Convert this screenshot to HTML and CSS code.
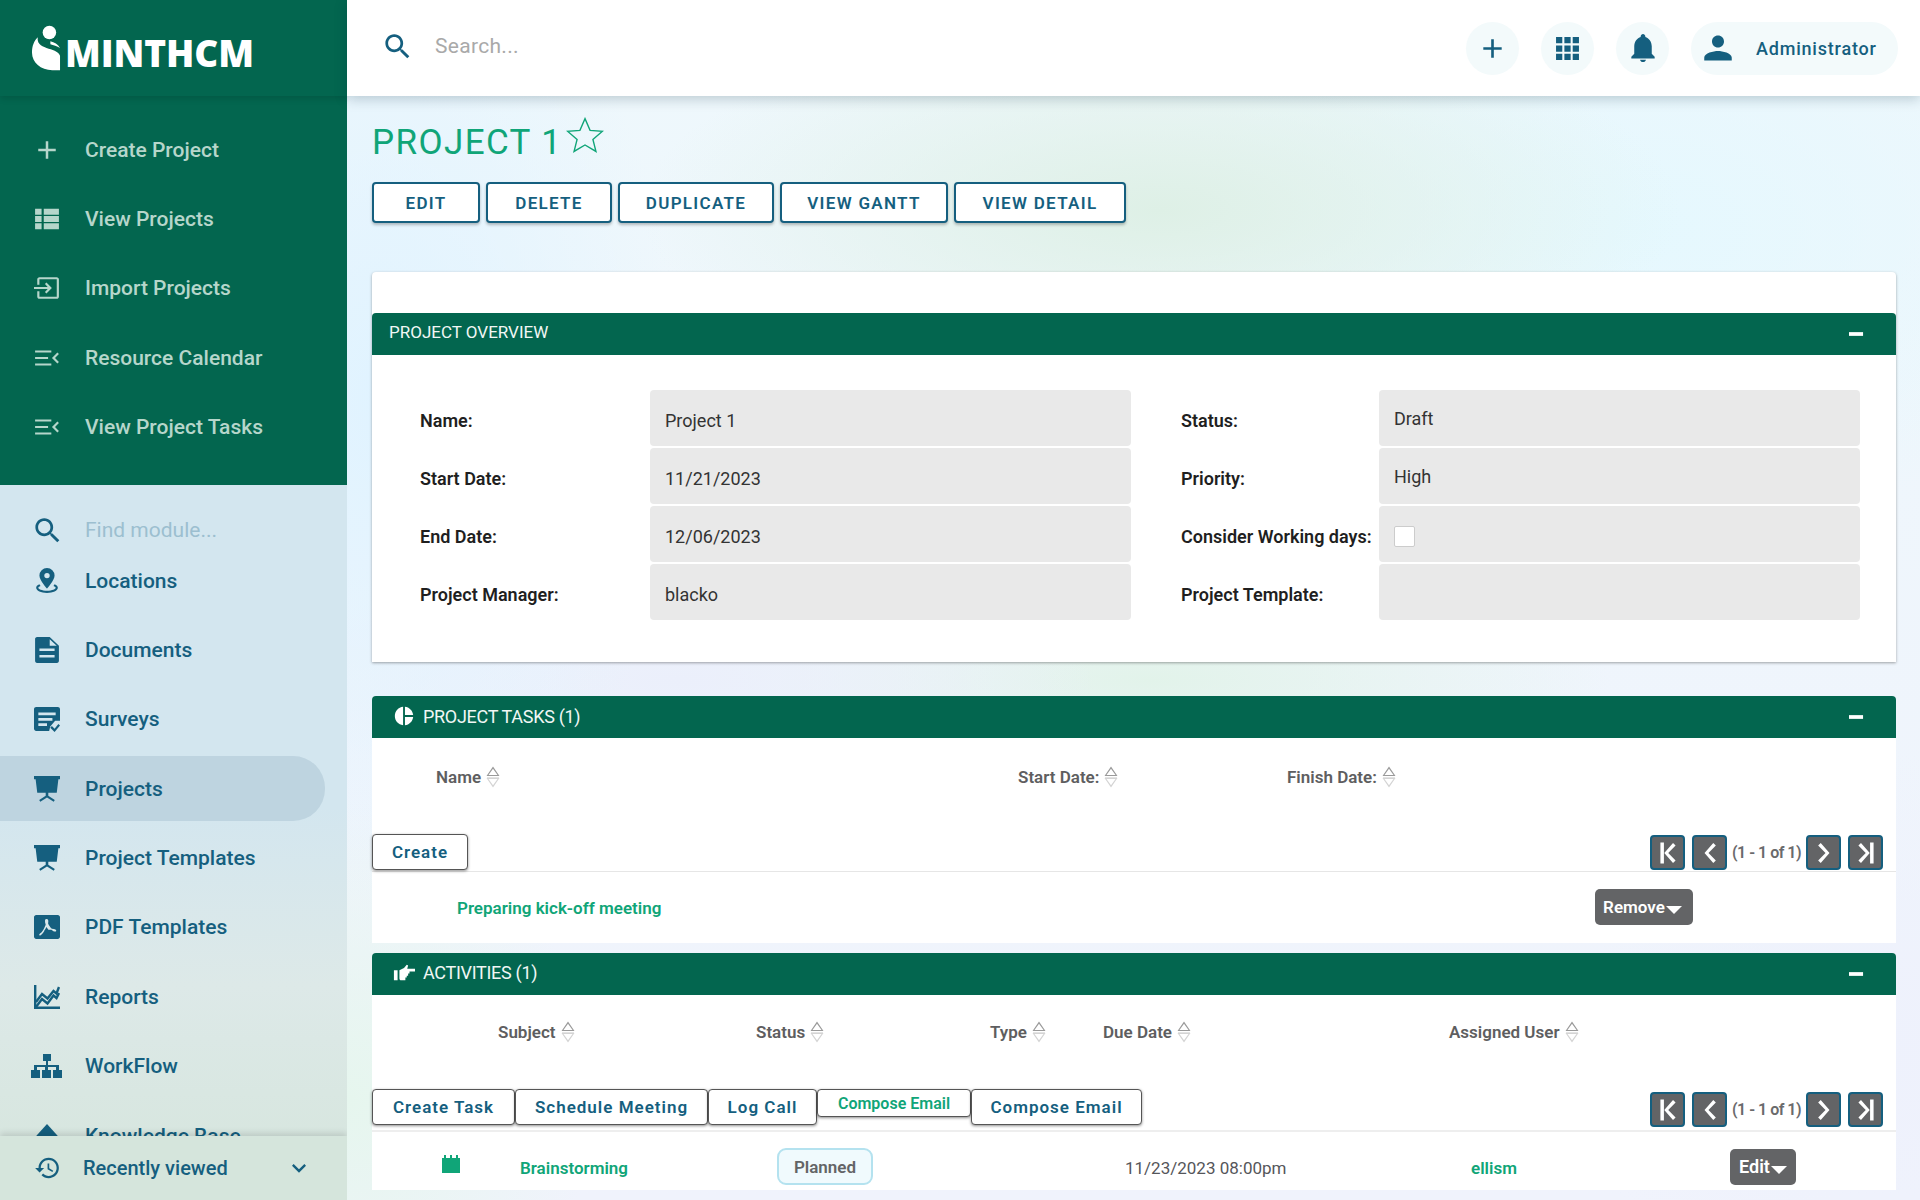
FILE: index.html
```html
<!DOCTYPE html>
<html lang="en">
<head>
    <meta charset="UTF-8">
    <meta name="viewport" content="width=device-width, initial-scale=1.0">
    <title>Project 1 - MintHCM</title>
    <link rel="stylesheet" href="styles.css">
</head>
<body>

    <!-- Shared icons -->
    <svg class="sprite" xmlns="http://www.w3.org/2000/svg">
        <symbol id="i-plus" viewBox="4 4 16 16"><path d="M19 13h-6v6h-2v-6H5v-2h6V5h2v6h6v2z"/></symbol>
        <symbol id="i-search" viewBox="2 2 19 19"><path d="M15.5 14h-.79l-.28-.27C15.41 12.59 16 11.11 16 9.5 16 5.91 13.09 3 9.5 3S3 5.91 3 9.5 5.91 16 9.5 16c1.61 0 3.09-.59 4.23-1.57l.27.28v.79l5 4.99L20.49 19l-4.99-5zm-6 0C7.01 14 5 11.99 5 9.5S7.01 5 9.5 5 14 7.01 14 9.5 11.99 14 9.5 14z"/></symbol>
        <symbol id="i-menu" viewBox="0 0 24 24"><path d="M1 19h15v-2H1v2zm0-6h12v-2H1v2zM1 5v2h15V5H1zm22 10.6L19.4 12 23 8.4 21.6 7l-5 5 5 5 1.400-1.400z"/></symbol>
        <symbol id="i-board" viewBox="0 0 24 24"><path d="M0 0h24v3h-1.500L21 15.500H13.200v2.700l6 4-1 1.500-6.200-3.800-6.200 3.800-1-1.500 6-4v-2.700H3L1.500 3H0V0z"/></symbol>
        <symbol id="i-sort" viewBox="0 0 16 24"><path d="M8 1.500 14.500 11h-13L8 1.500zM8 3.800 3.500 10h9L8 3.800z" fill="#9a9a9a"/><path d="M1.500 13h13L8 22.500 1.500 13zM3.500 14 8 20.200 12.500 14h-9z" fill="#d4d4d4"/><path d="M2 12h12v.9H2z" fill="#e0e0e0"/></symbol>
        <symbol id="i-first" viewBox="0 0 24 24"><path d="M5.500 3h3v18h-3V3zm13 2.600L12.200 12l6.300 6.400-2.200 2.100L8.800 12l7.500-8.500 2.200 2.100z"/></symbol>
        <symbol id="i-prev" viewBox="0 0 24 24"><path d="M17 5.600 10.700 12l6.300 6.400-2.200 2.100L7.300 12l7.500-8.500L17 5.600z"/></symbol>
        <symbol id="i-next" viewBox="0 0 24 24"><path d="M7 5.600 13.300 12 7 18.400l2.200 2.100L16.700 12 9.200 3.500 7 5.600z"/></symbol>
        <symbol id="i-last" viewBox="0 0 24 24"><path d="M18.500 3h-3v18h3V3zm-13 2.600L11.800 12l-6.300 6.400 2.200 2.100L15.200 12 7.700 3.500 5.500 5.600z"/></symbol>
        <symbol id="i-minus" viewBox="0 0 16 4"><path d="M0 0h15v4H0z"/></symbol>
    </svg>

    <div class="app">

        <!-- Sidebar -->
        <aside class="sidebar">
            <div class="side-top">
                <div class="logo">
                    <svg class="logo-mark" viewBox="0 0 30 46"><circle cx="18" cy="7" r="7"/><path d="M6 12c-1 6 3 9 9 11 6 2 12 3 14 8v15h-8C9 46 0 38 0 28c0-7 2-12 6-16zM19 16c4 1 8 3 10 7-3-2-7-3-10-4z"/></svg>
                    <span class="logo-text">MINTHCM</span>
                </div>
                <nav class="action-nav">
                    <a class="action-item" href="#"><svg class="side-icon plus-icon"><use href="#i-plus"/></svg>Create Project</a>
                    <a class="action-item" href="#"><svg class="side-icon" viewBox="0 0 24 24"><path d="M1 2.500h6v5.500H1V2.500zm8 0h14v5.500H9V2.500zM1 9.300h6v5.500H1V9.300zm8 0h14v5.500H9V9.300zM1 16h6v5.500H1V16zm8 0h14v5.500H9V16z"/></svg>View Projects</a>
                    <a class="action-item" href="#"><svg class="side-icon" viewBox="0 0 24 24"><path d="M10.090 15.590 11.500 17l5-5-5-5-1.410 1.410L12.670 11H0v2h12.670l-2.580 2.590zM21 2H5c-1.110 0-2 .9-2 2v5h2V4h16v16H5v-5H3v5c0 1.100.89 2 2 2h16c1.100 0 2-.9 2-2V4c0-1.100-.9-2-2-2z"/></svg>Import Projects</a>
                    <a class="action-item" href="#"><svg class="side-icon"><use href="#i-menu"/></svg>Resource Calendar</a>
                    <a class="action-item" href="#"><svg class="side-icon"><use href="#i-menu"/></svg>View Project Tasks</a>
                </nav>
            </div>

            <div class="side-bottom">
                <div class="module-search">
                    <svg class="side-icon"><use href="#i-search"/></svg>
                    <span class="module-search-text">Find module...</span>
                </div>
                <nav class="module-nav">
                    <a class="module-item" href="#"><svg class="side-icon" viewBox="0 0 24 24"><path d="M12 0a7 7 0 0 0-7 7c0 4.500 7 12 7 12s7-7.500 7-12a7 7 0 0 0-7-7zm0 9.500a2.500 2.500 0 1 1 0-5 2.500 2.500 0 0 1 0 5zM5 15c-2 .8-3 1.900-3 3.200C2 21 6.500 23 12 23s10-2 10-4.800c0-1.300-1-2.400-3-3.200l-1 1.700c1.200.5 2 1 2 1.500 0 1-3 2.800-8 2.800s-8-1.800-8-2.800c0-.5.800-1 2-1.500L5 15z"/></svg>Locations</a>
                    <a class="module-item" href="#"><svg class="side-icon" viewBox="0 0 24 24"><path d="M14.500 0H3C1.500 0 1 1 1 2v20c0 1 .5 2 2 2h18c1.500 0 2-1 2-2V8L14.500 0zM19 19H5v-2.500h14V19zm0-6H5v-2.500h14V13zm-4.500-5V2l6.500 6h-6.500z"/></svg>Documents</a>
                    <a class="module-item" href="#"><svg class="side-icon" viewBox="0 0 24 24"><path d="M2 1h20c1 0 2 .8 2 2v10.500h-4.500L15 19l-1 4H2c-1 0-2-1-2-2V3c0-1.200 1-2 2-2zm2 5v2.500h16V6H4zm0 5v2.500h13V11H4zm0 5v2.500h8V16H4zM15 20l1.500-1.500 2.500 2.500 3.500-4.500L24 18l-5 6-4-4z"/></svg>Surveys</a>
                    <a class="module-item active" href="#"><svg class="side-icon"><use href="#i-board"/></svg>Projects</a>
                    <a class="module-item" href="#"><svg class="side-icon"><use href="#i-board"/></svg>Project Templates</a>
                    <a class="module-item" href="#"><svg class="side-icon" viewBox="0 0 24 24"><path d="M2 1h20c1 0 2 1 2 2v18c0 1-1 2-2 2H2c-1 0-2-1-2-2V3c0-1 1-2 2-2zm9.500 3.500c-1.500 0-1.800 1.800-.7 5.500-1.200 3-2.500 5.500-4 7-1.500.800-2.300 1.800-1.800 2.500.6.800 2.400-.2 4.500-3.800 2-.7 4.500-1.200 6.500-1.200 2 1.700 4 2.200 4.500 1.200.4-1-1-1.800-4-2-1.500-1.500-2.700-3.300-3.500-5 .5-2.700.3-4.200-1.500-4.200zm0 7.500c.5 1 1.300 2 2.200 3-1.500.1-3 .4-4.400.8.900-1.300 1.600-2.600 2.200-3.800z"/></svg>PDF Templates</a>
                    <a class="module-item" href="#"><svg class="side-icon reports-icon" viewBox="0 0 26 24"><path d="M1.200 0v22.800H26" /><path d="M2 17 8 9l5.500 4.500L19.500 6l3 2.500L25 2"/><path d="M2 22 8 14l5.500 4.500 6-8 3 2.500L25 8"/></svg>Reports</a>
                    <a class="module-item" href="#"><svg class="side-icon workflow-icon" viewBox="0 0 30 24"><path d="M11 0h8v7h-3v4h11v5h3v8h-9v-8h3v-3h-8v3h3v8h-9v-8h3v-3H5v3h3v8H-1v-8h3v-5h12V7h-3V0z"/></svg>WorkFlow</a>
                    <a class="module-item" href="#"><svg class="side-icon" viewBox="0 0 24 24"><path d="M12 1 22 12H2L12 1z"/></svg>Knowledge Base</a>
                </nav>
                <div class="recent">
                    <svg class="side-icon" viewBox="0 2 23 20"><path d="M13 3c-4.970 0-9 4.030-9 9H1l3.890 3.890.07.14L9 12H6c0-3.870 3.130-7 7-7s7 3.130 7 7-3.130 7-7 7c-1.930 0-3.680-.79-4.940-2.060l-1.420 1.420C8.270 19.990 10.510 21 13 21c4.970 0 9-4.030 9-9s-4.030-9-9-9zm-1 5v5l4.280 2.540.72-1.210-3.500-2.080V8H12z"/></svg>
                    <span class="recent-text">Recently viewed</span>
                    <svg class="recent-chevron" viewBox="0 0 24 24"><path d="M7.410 8.590 12 13.170l4.590-4.580L18 10l-6 6-6-6z"/></svg>
                </div>
            </div>
        </aside>

        <!-- Main area -->
        <div class="main">
            <header class="topbar">
                <svg class="top-search-icon"><use href="#i-search"/></svg>
                <span class="top-search-text">Search...</span>
                <a class="round-btn" href="#"><svg class="round-plus"><use href="#i-plus"/></svg></a>
                <a class="round-btn" href="#"><svg viewBox="0 0 24 24"><path d="M1 1h6v6H1zM9 1h6v6H9zM17 1h6v6h-6zM1 9h6v6H1zM9 9h6v6H9zM17 9h6v6h-6zM1 17h6v6H1zM9 17h6v6H9zM17 17h6v6h-6z"/></svg></a>
                <a class="round-btn" href="#"><svg class="bell" viewBox="0 0 24 24"><path d="M12 24c1.500 0 2.500-1 2.500-2h-5c0 1 1 2 2.500 2zm10-4.500-2.500-2.500v-6.500C19.500 6.500 17 3.400 14 2.500V2c0-1-1-2-2-2s-2 1-2 2v.5C7 3.400 4.500 6.500 4.500 10.500V17L2 19.500V21h20v-1.500z"/></svg></a>
                <a class="user-pill" href="#">
                    <svg viewBox="0 0 24 24"><path d="M12 11.500c2.700 0 4.800-2.100 4.800-4.800S14.700 2 12 2 7.200 4 7.200 6.700s2.100 4.800 4.800 4.800zm0 2.800c-3.500 0-11 1.700-11 5.200V22h22v-2.500c0-3.500-7.500-5.200-11-5.200z"/></svg>
                    <span>Administrator</span>
                </a>
            </header>

            <div class="content">
                <div class="title-row">
                    <h1>PROJECT 1</h1>
                    <svg class="star" viewBox="0 0 36 34"><path d="M18 1.500 22.800 12.600 34.500 13.500 25.500 21.200 28.400 32.600 18 26.500 7.600 32.600 10.500 21.200 1.500 13.500 13.200 12.600z"/></svg>
                </div>

                <div class="actions">
                    <a class="action-btn btn-edit" href="#">EDIT</a>
                    <a class="action-btn btn-delete" href="#">DELETE</a>
                    <a class="action-btn btn-duplicate" href="#">DUPLICATE</a>
                    <a class="action-btn btn-gantt" href="#">VIEW GANTT</a>
                    <a class="action-btn btn-detail" href="#">VIEW DETAIL</a>
                </div>

                <!-- Overview -->
                <section class="overview">
                    <div class="panel-head">
                        <span class="overview-title">PROJECT OVERVIEW</span>
                        <svg class="minus"><use href="#i-minus"/></svg>
                    </div>
                    <div class="fields">
                        <div class="field-label">Name:</div>
                        <div class="field-value">Project 1</div>
                        <div class="field-label">Status:</div>
                        <div class="field-value raised">Draft</div>

                        <div class="field-label">Start Date:</div>
                        <div class="field-value">11/21/2023</div>
                        <div class="field-label">Priority:</div>
                        <div class="field-value raised">High</div>

                        <div class="field-label">End Date:</div>
                        <div class="field-value">12/06/2023</div>
                        <div class="field-label">Consider Working days:</div>
                        <div class="field-value"><span class="checkbox"></span></div>

                        <div class="field-label">Project Manager:</div>
                        <div class="field-value">blacko</div>
                        <div class="field-label">Project Template:</div>
                        <div class="field-value"></div>
                    </div>
                </section>

                <!-- Project tasks -->
                <section class="subpanel tasks">
                    <div class="panel-head">
                        <span class="panel-title">
                            <svg viewBox="0 0 24 24"><path d="M11 2v20c-5.070-.5-9-4.790-9-10s3.930-9.500 9-10zm2.030 0v8.990H22c-.47-4.740-4.240-8.520-8.970-8.990zm0 11.010V22c4.740-.47 8.500-4.250 8.970-8.990h-8.970z"/></svg>
                            PROJECT TASKS (1)
                        </span>
                        <svg class="minus"><use href="#i-minus"/></svg>
                    </div>
                    <div class="col-heads">
                        <span class="col-name">Name <svg class="sort"><use href="#i-sort"/></svg></span>
                        <span class="col-start">Start Date: <svg class="sort"><use href="#i-sort"/></svg></span>
                        <span>Finish Date: <svg class="sort"><use href="#i-sort"/></svg></span>
                    </div>
                    <div class="toolbar">
                        <div class="tool-btns">
                            <a class="tool-btn" href="#">Create</a>
                        </div>
                        <div class="pager">
                            <a class="pager-btn" href="#"><svg><use href="#i-first"/></svg></a>
                            <a class="pager-btn" href="#"><svg><use href="#i-prev"/></svg></a>
                            <span class="pager-text">(1 - 1 of 1)</span>
                            <a class="pager-btn" href="#"><svg><use href="#i-next"/></svg></a>
                            <a class="pager-btn" href="#"><svg><use href="#i-last"/></svg></a>
                        </div>
                    </div>
                    <div class="task-row">
                        <a class="link" href="#">Preparing kick-off meeting</a>
                        <a class="row-btn" href="#">Remove<i class="caret"></i></a>
                    </div>
                </section>

                <!-- Activities -->
                <section class="subpanel activities">
                    <div class="panel-head">
                        <span class="panel-title">
                            <svg viewBox="0 0 24 24"><path d="M1 10h4v11H1V10zm6 0 5-2.500L15 4l1.500 1-1 3.500H24v3h-6v2h-1.500v2.500H15V18h-1.500v3H9c-1 0-2-.5-2-2v-9z"/></svg>
                            ACTIVITIES (1)
                        </span>
                        <svg class="minus"><use href="#i-minus"/></svg>
                    </div>
                    <div class="col-heads">
                        <span class="col-subject">Subject <svg class="sort"><use href="#i-sort"/></svg></span>
                        <span class="col-status">Status <svg class="sort"><use href="#i-sort"/></svg></span>
                        <span class="col-type">Type <svg class="sort"><use href="#i-sort"/></svg></span>
                        <span class="col-due">Due Date <svg class="sort"><use href="#i-sort"/></svg></span>
                        <span>Assigned User <svg class="sort"><use href="#i-sort"/></svg></span>
                    </div>
                    <div class="toolbar">
                        <div class="tool-btns">
                            <a class="tool-btn btn-task" href="#">Create Task</a>
                            <a class="tool-btn btn-meeting" href="#">Schedule Meeting</a>
                            <a class="tool-btn btn-call" href="#">Log Call</a>
                            <a class="tool-btn btn-green" href="#">Compose Email</a>
                            <a class="tool-btn btn-email" href="#">Compose Email</a>
                        </div>
                        <div class="pager">
                            <a class="pager-btn" href="#"><svg><use href="#i-first"/></svg></a>
                            <a class="pager-btn" href="#"><svg><use href="#i-prev"/></svg></a>
                            <span class="pager-text">(1 - 1 of 1)</span>
                            <a class="pager-btn" href="#"><svg><use href="#i-next"/></svg></a>
                            <a class="pager-btn" href="#"><svg><use href="#i-last"/></svg></a>
                        </div>
                    </div>
                    <div class="activity-row">
                        <svg class="meeting-icon" viewBox="0 0 18 18"><path d="M0 3h2V0h2v3h4V0h2v3h4V0h2v3h2v15H0V3z"/></svg>
                        <a class="link col-link" href="#">Brainstorming</a>
                        <span class="status-pill">Planned</span>
                        <span class="due-date">11/23/2023 08:00pm</span>
                        <a class="link col-user" href="#">ellism</a>
                        <a class="row-btn edit-btn" href="#">Edit<i class="caret"></i></a>
                    </div>
                </section>
            </div>
        </div>
    </div>

</body>
</html>
```

FILE: styles.css
```css
* {
    box-sizing: border-box;
}

html, body {
    height: 100%;
}

body {
    margin: 0;
    font-family: Roboto, "Noto Sans", sans-serif;
    color: #333;
    overflow: hidden;
    background-color: #edf6fb;
    background-image:
        radial-gradient(ellipse 520px 190px at 1160px 210px, #def0e6 0%, rgba(222, 240, 230, 0) 100%),
        radial-gradient(ellipse 520px 300px at 1640px 230px, #e5f8fe 0%, rgba(229, 248, 254, 0) 100%),
        radial-gradient(ellipse 300px 500px at 380px 400px, #e0f3ff 0%, rgba(224, 243, 255, 0) 100%),
        radial-gradient(ellipse 420px 120px at 680px 680px, #ebeffb 0%, rgba(235, 239, 251, 0) 100%),
        radial-gradient(ellipse 460px 110px at 1150px 680px, #e2f3ea 0%, rgba(226, 243, 234, 0) 100%),
        radial-gradient(ellipse 240px 300px at 350px 1100px, #e6f6ee 0%, rgba(230, 246, 238, 0) 100%),
        radial-gradient(ellipse 300px 300px at 1880px 1050px, #eef1fc 0%, rgba(238, 241, 252, 0) 100%),
        linear-gradient(180deg, #eef8fc 0%, #f0f3fc 100%);
}

a {
    text-decoration: none;
    color: inherit;
}

.sprite {
    display: none;
}

.app {
    display: flex;
    height: 1200px;
}

/* Sidebar */
.sidebar {
    width: 347px;
    flex-shrink: 0;
    display: flex;
    flex-direction: column;
    height: 100%;
}

.side-top {
    height: 485px;
    background: #03664f;
    color: #b6d6cb;
    fill: #b6d6cb;
}

.logo {
    height: 96px;
    padding: 25px 0 0 32px;
    display: flex;
    align-items: flex-start;
    box-shadow: 0 3px 6px rgba(0, 0, 0, 0.12);
}

.logo-mark {
    width: 29px;
    height: 46px;
    fill: #fff;
}

.logo-text {
    margin: 9px 0 0 4px;
    color: #fff;
    font-family: "Open Sans", sans-serif;
    font-weight: 800;
    font-size: 37px;
    line-height: 38px;
    letter-spacing: -0.1px;
}

.side-icon {
    width: 26px;
    height: 26px;
    flex-shrink: 0;
}

.plus-icon {
    width: 20px;
    height: 20px;
    margin: 0 3px;
}

.workflow-icon {
    width: 30px;
    height: 26px;
    margin: 0 -2px;
    overflow: visible;
}

.reports-icon {
    fill: none;
    stroke: #155f7f;
    stroke-width: 2.4;
}

.action-nav {
    padding-top: 19px;
}

.action-item {
    display: flex;
    align-items: center;
    gap: 25px;
    height: 69.4px;
    padding-left: 34px;
    font-size: 21px;
    font-weight: 500;
}

.side-bottom {
    flex: 1;
    min-height: 0;
    position: relative;
    overflow: hidden;
    color: #155f7f;
    fill: #155f7f;
    background: linear-gradient(180deg, #d3e6ef 0%, #d3e6ef 45%, #dde9e8 70%, #d5e5dc 100%);
}

.module-search {
    display: flex;
    align-items: center;
    gap: 25px;
    height: 30px;
    margin-top: 30px;
    padding-left: 34px;
}

.module-search-text {
    font-size: 21px;
    color: #9cbfd0;
}

.module-nav {
    display: flex;
    flex-direction: column;
    gap: 4.4px;
    margin-top: 3px;
}

.module-item {
    display: flex;
    align-items: center;
    gap: 25px;
    width: 325px;
    height: 65px;
    flex-shrink: 0;
    padding-left: 34px;
    font-size: 21px;
    font-weight: 500;
    border-radius: 0 32px 32px 0;
}

.module-item.active {
    background: #bed4e0;
}

.recent {
    position: absolute;
    left: 0;
    right: 0;
    bottom: 0;
    height: 64px;
    display: flex;
    align-items: center;
    padding-left: 34px;
    background: #d5e5dc;
    box-shadow: 0 -3px 6px rgba(0, 0, 0, 0.12);
}

.recent-text {
    margin-left: 23px;
    font-size: 20px;
    font-weight: 500;
}

.recent-chevron {
    width: 28px;
    height: 28px;
    margin-left: 57px;
}

/* Top bar */
.main {
    flex: 1;
    min-width: 0;
}

.topbar {
    height: 96px;
    display: flex;
    align-items: center;
    padding: 0 22px 0 37px;
    background: #fff;
    fill: #155f7f;
    box-shadow: 0 3px 12px rgba(0, 40, 60, 0.22);
}

.top-search-icon {
    width: 26px;
    height: 26px;
    margin-top: -4px;
}

.top-search-text {
    flex: 1;
    margin: -4px 0 0 25px;
    font-size: 21px;
    color: #a9a9a9;
    letter-spacing: 0.3px;
}

.round-btn {
    width: 53px;
    height: 53px;
    margin-right: 22px;
    display: flex;
    align-items: center;
    justify-content: center;
    border-radius: 50%;
    background: #f3fafb;
}

.round-btn svg {
    width: 25px;
    height: 25px;
}

.round-btn .round-plus {
    width: 21px;
    height: 21px;
}

.round-btn .bell {
    width: 28px;
    height: 28px;
}

.user-pill {
    width: 207px;
    height: 53px;
    display: flex;
    align-items: center;
    padding-left: 12px;
    border-radius: 27px;
    background: #f3fafb;
    color: #155f7f;
    font-size: 18px;
    font-weight: 500;
    letter-spacing: 0.8px;
}

.user-pill svg {
    width: 30px;
    height: 30px;
    margin-right: 23px;
}

/* Content */
.content {
    padding: 0 24px 0 25px;
}

.title-row {
    height: 86px;
    display: flex;
    align-items: flex-start;
}

h1 {
    margin: 26px 0 0;
    font-size: 35px;
    line-height: 42px;
    font-weight: 400;
    letter-spacing: 1.4px;
    color: #10a578;
}

.star {
    width: 38px;
    height: 36px;
    margin: 21px 0 0 4px;
    fill: none;
    stroke: #10a578;
    stroke-width: 1.3;
}

.actions {
    display: flex;
    gap: 6px;
    height: 41px;
}

.action-btn {
    display: flex;
    align-items: center;
    justify-content: center;
    background: #fff;
    border: 2px solid #155f7f;
    border-radius: 4px;
    box-shadow: 0 2px 3px rgba(0, 0, 0, 0.25);
    color: #155f7f;
    font-size: 17px;
    font-weight: 600;
    letter-spacing: 1.3px;
}

.btn-edit { width: 108px; }
.btn-delete { width: 126px; }
.btn-duplicate { width: 156px; }
.btn-gantt { width: 168px; }
.btn-detail { width: 172px; }

.overview {
    margin-top: 49px;
    padding-top: 41px;
    height: 390px;
    background: #fff;
    border-radius: 4px 4px 0 0;
    box-shadow: 0 1px 3px rgba(0, 0, 0, 0.35);
}

.panel-head {
    height: 42px;
    display: flex;
    align-items: center;
    justify-content: space-between;
    padding: 0 32px 0 17px;
    background: #03664f;
    border-radius: 4px 4px 0 0;
    color: #f1f7f5;
    font-size: 17px;
}

.overview-title {
    margin-top: -4px;
}

.minus {
    width: 15px;
    height: 4px;
    margin-top: -1px;
    fill: #fff;
}

.panel-title {
    display: flex;
    align-items: center;
    gap: 8px;
    padding-left: 4px;
    margin-top: -2px;
    font-size: 18px;
    letter-spacing: -0.3px;
}

.activities .panel-title {
    margin-top: -4px;
}

.panel-title svg {
    width: 22px;
    height: 22px;
    fill: #fff;
}

.fields {
    display: grid;
    grid-template-columns: 230px 481px 198px 481px;
    grid-auto-rows: 56px;
    row-gap: 2px;
    padding: 35px 0 0 48px;
}

.field-label {
    display: flex;
    align-items: center;
    padding-top: 4px;
    font-size: 18px;
    font-weight: 600;
    color: #1f1f1f;
    white-space: nowrap;
}

.field-label:nth-child(4n + 3) {
    margin-left: 50px;
    margin-right: -50px;
}

.field-value {
    display: flex;
    align-items: center;
    padding: 4px 0 0 15px;
    background: #e9e9e9;
    border-radius: 4px;
    font-size: 18px;
    color: #333;
}

.field-value:nth-child(4n) {
    position: relative;
    left: 50px;
}

.field-value.raised {
    padding-top: 0;
}

.checkbox {
    width: 21px;
    height: 21px;
    background: #fff;
    border: 1px solid #ccc;
    border-radius: 2px;
}

/* Subpanels */
.subpanel {
    background: #fff;
    border-radius: 4px 4px 0 0;
}

.tasks {
    height: 247px;
    margin-top: 34px;
}

.activities {
    height: 237px;
    margin-top: 10px;
}

.col-heads {
    display: flex;
    align-items: center;
    height: 78px;
    padding-left: 64px;
    font-size: 17px;
    font-weight: 600;
    color: #5e5e60;
}

.activities .col-heads {
    height: 74px;
    padding-left: 126px;
}

.col-heads span {
    display: flex;
    align-items: center;
    gap: 4px;
    white-space: nowrap;
}

.sort {
    width: 16px;
    height: 24px;
}

.col-name { width: 582px; }
.col-start { width: 269px; }
.col-subject { width: 258px; }
.col-status { width: 234px; }
.col-type { width: 113px; }
.col-due { width: 346px; }

.toolbar {
    display: flex;
    align-items: flex-start;
    justify-content: space-between;
    margin-top: 18px;
    padding-right: 13px;
    height: 38px;
    border-bottom: 1px solid #e6e6e6;
}

.activities .toolbar {
    height: 43px;
    margin-top: 20px;
    border-bottom-width: 2px;
    border-bottom-color: #eeeeee;
}

.tool-btns {
    display: flex;
    align-items: flex-start;
}

.tool-btn {
    display: flex;
    align-items: center;
    justify-content: center;
    width: 96px;
    height: 36px;
    background: #fff;
    border: 1px solid #555;
    border-radius: 4px;
    box-shadow: 0 1px 3px rgba(0, 0, 0, 0.45);
    color: #155f7f;
    font-size: 17px;
    font-weight: 600;
    letter-spacing: 1px;
}

.btn-task { width: 143px; }
.btn-meeting { width: 193px; }
.btn-call { width: 109px; }
.btn-email { width: 171px; }

.btn-green {
    width: 154px;
    height: 28px;
    color: #10a578;
    font-size: 16px;
    letter-spacing: 0;
}

.pager {
    display: flex;
    align-items: center;
    height: 35px;
    margin-top: 1px;
}

.activities .pager {
    margin-top: 3px;
}

.pager-btn {
    display: flex;
    align-items: center;
    justify-content: center;
    width: 35px;
    height: 35px;
    background: #636466;
    border: 2px solid #155f7f;
    border-radius: 4px;
    fill: #fff;
    margin-left: 7px;
}

.pager-btn svg {
    width: 28px;
    height: 28px;
    flex-shrink: 0;
}

.pager-text {
    margin: 0 0 0 5px;
    width: 67px;
    text-align: center;
    font-size: 16px;
    font-weight: 600;
    letter-spacing: -0.5px;
    color: #6a6a6c;
    white-space: nowrap;
}

.link {
    color: #10a578;
    font-size: 17px;
    font-weight: 600;
}

.task-row {
    display: flex;
    align-items: center;
    justify-content: space-between;
    height: 71px;
    padding: 0 203px 0 85px;
}

.row-btn {
    display: flex;
    align-items: center;
    justify-content: center;
    width: 98px;
    height: 36px;
    padding-right: 3px;
    background: #636466;
    border-radius: 5px;
    color: #fff;
    font-size: 17px;
    font-weight: 600;
}

.task-row .row-btn {
    margin-top: -2px;
}

.caret {
    width: 0;
    height: 0;
    margin: 6px 0 0 1px;
    border-left: 8px solid transparent;
    border-right: 8px solid transparent;
    border-top: 8px solid #fff;
}

.activity-row {
    display: flex;
    align-items: center;
    height: 37px;
    margin-top: 16px;
    padding-left: 70px;
    font-size: 17px;
}

.activity-row .link,
.due-date {
    padding-top: 2px;
}

.meeting-icon {
    width: 18px;
    height: 18px;
    margin-top: -6px;
    fill: #10a578;
}

.col-link {
    width: 257px;
    margin-left: 60px;
}

.status-pill {
    display: flex;
    align-items: center;
    justify-content: center;
    width: 96px;
    height: 37px;
    background: #f0fafd;
    border: 2px solid #b4e2ef;
    border-radius: 9px;
    color: #636466;
    font-weight: 600;
}

.due-date {
    width: 346px;
    margin-left: 252px;
    color: #55565a;
}

.col-user {
    width: 259px;
}

.edit-btn {
    width: 66px;
    padding-right: 0;
    font-size: 18px;
}
```
